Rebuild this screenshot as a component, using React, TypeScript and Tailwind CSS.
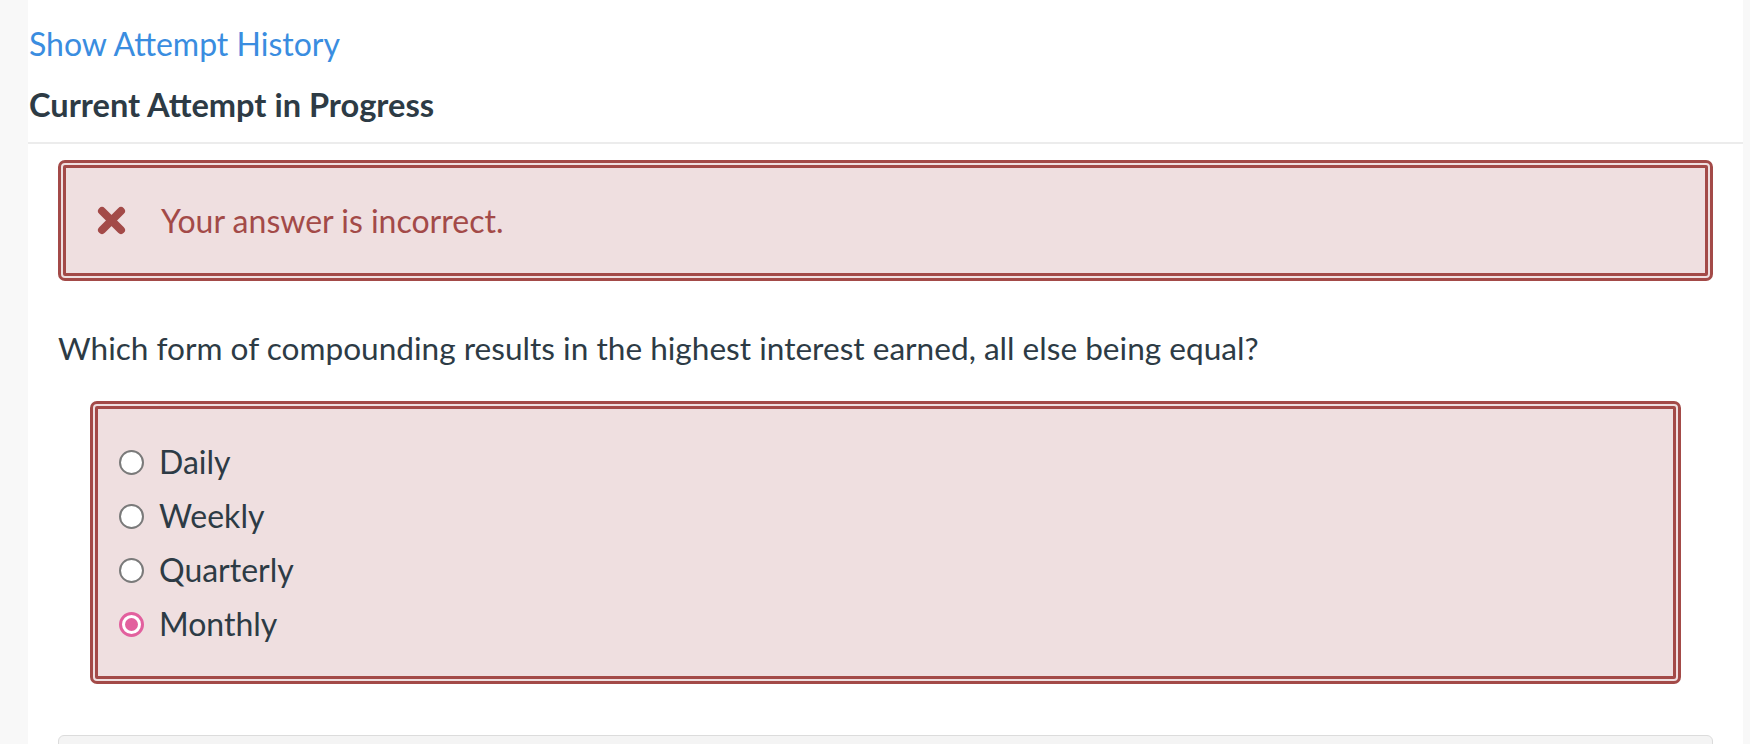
import React from 'react';

const options = ['Daily', 'Weekly', 'Quarterly', 'Monthly'];

const Radio: React.FC<{ checked?: boolean }> = ({ checked }) =>
  checked ? (
    <span className="flex h-[25px] w-[25px] shrink-0 items-center justify-center rounded-full border-[3px] border-[#e2609e] bg-white">
      <span className="h-[13px] w-[13px] rounded-full bg-[#e2609e]" />
    </span>
  ) : (
    <span className="h-[25px] w-[25px] shrink-0 rounded-full border-2 border-[#7a7a7a] bg-white" />
  );

const App: React.FC = () => {
  return (
    <div
      className="flex min-h-screen bg-[#f8f8f8] text-[#2d3b45]"
      style={{ fontFamily: 'Lato, "Open Sans", sans-serif' }}
    >
      <div className="w-[28px] shrink-0" />
      <main className="flex-1 overflow-hidden bg-white">
        <div className="border-b-2 border-[#ececec] pb-[18px] pl-px pt-[25px]">
          <a href="#" className="block text-[32px] leading-[38px] text-[#3a8de0]">
            Show Attempt History
          </a>
          <h2 className="mt-[23px] text-[32.6px] font-bold leading-[38px]">Current Attempt in Progress</h2>
        </div>

        <div className="px-[30px] pt-[16px]">
          <div className="flex h-[121px] items-center rounded-[7px] border-8 border-double border-[#a34a48] bg-[#efdfe0] pl-[31px]">
            <svg width="29" height="29" viewBox="0 0 29 29" className="shrink-0">
              <path d="M5 5 L24 24 M24 5 L5 24" stroke="#a34a48" strokeWidth="8" strokeLinecap="round" />
            </svg>
            <span className="ml-[35px] text-[32px] leading-[38px] text-[#a34a48]">Your answer is incorrect.</span>
          </div>

          <p className="mt-[48px] text-[31.6px] leading-[38px]">
            Which form of compounding results in the highest interest earned, all else being equal?
          </p>

          <div className="mx-[32px] mt-[34px] rounded-[7px] border-8 border-double border-[#a34a48] bg-[#efdfe0] pb-[25px] pl-[21px] pt-[26px]">
            {options.map((o) => (
              <label key={o} className="flex h-[54px] items-center gap-[15px] text-[32px]">
                <Radio checked={o === 'Monthly'} />
                <span>{o}</span>
              </label>
            ))}
          </div>

          <div className="mt-[51px] h-[80px] rounded-t-[6px] border border-[#dcdcdc] bg-[#f4f4f4]" />
        </div>
      </main>
      <div className="w-[7px] shrink-0" />
    </div>
  );
};

export default App;
